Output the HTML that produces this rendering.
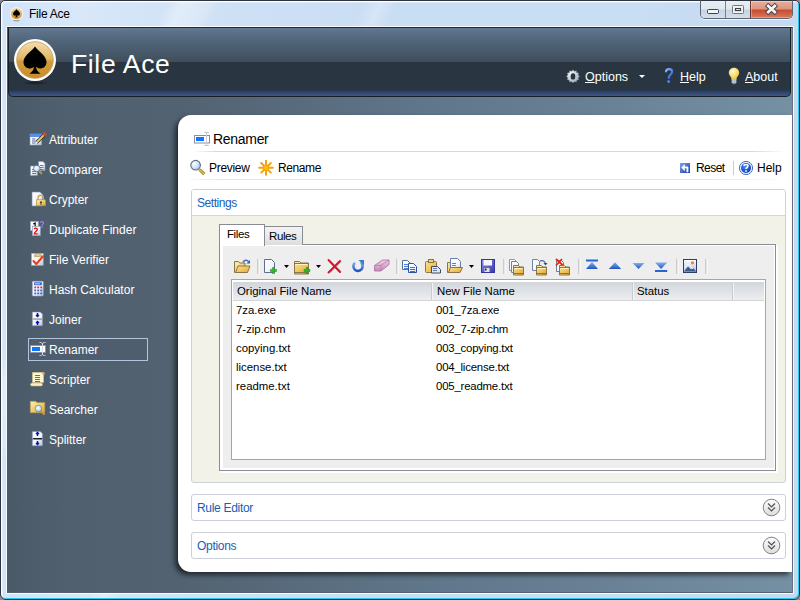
<!DOCTYPE html>
<html><head><meta charset="utf-8">
<style>
*{margin:0;padding:0;box-sizing:border-box}
html,body{width:800px;height:600px;overflow:hidden;background:#8a8c90}
body{font-family:"Liberation Sans",sans-serif;font-size:12px;position:relative}
.a{position:absolute}
#frame{left:0;top:0;width:800px;height:600px;border:1px solid #2c3440;border-radius:5px 5px 6px 6px;
 background:linear-gradient(115deg,rgba(255,255,255,0) 0,rgba(255,255,255,0) 150px,rgba(255,255,255,0.35) 165px,rgba(255,255,255,0.2) 190px,rgba(255,255,255,0) 200px,rgba(255,255,255,0) 330px,rgba(255,255,255,0.25) 345px,rgba(255,255,255,0) 360px),linear-gradient(90deg,#cfe3f9 0,#d8e8f9 80px,#cfe1f5 200px,#c9ddf3 400px,#cadef3 600px,#c4daf1 100%);
 box-shadow:inset 1px 1px 0 #fff,inset -1px -1px 0 #25c6ef,inset 2px 2px 0 rgba(255,255,255,.3)}
#client{left:7px;top:27px;width:786px;height:566px;border:1px solid #1f2a33;border-left-color:#4a5a69;border-right-color:#68727e;border-bottom-color:#56626e;box-shadow:0 0 0 1px rgba(255,255,255,0.85);
 background:linear-gradient(90deg,#4a5a69 0,#50606e 60px,#526271 170px,#60768a 420px,#6b8397 620px,#7590a3 100%)}
.side{left:30px;height:16px;width:140px;color:#fff;font-size:12px}
.side{letter-spacing:0}
.side span{position:absolute;left:19px;top:1px;white-space:nowrap}
.lv{font-size:11.4px;color:#000;white-space:nowrap}
.side svg{position:absolute;left:0;top:0}
</style></head><body>
<div id="frame" class="a"></div>
<!-- title bar -->
<svg class="a" style="left:9px;top:6px" width="15" height="16" viewBox="0 0 15 16">
 <ellipse cx="7.5" cy="14.6" rx="3.5" ry="0.8" fill="#000" opacity="0.3"/>
 <circle cx="7.5" cy="7.6" r="6.6" fill="#fbf3e6"/>
 <circle cx="7.5" cy="7.6" r="5.6" fill="url(#goldS)"/>
 <path d="M7.5 3.2C6.6 4.6 4 5.8 4 7.8c0 1.3 1 2 2 2 .6 0 1-.3 1.2-.5-.1.9-.6 1.5-1.3 2h3.2c-.7-.5-1.2-1.1-1.3-2 .2.2.6.5 1.2.5 1 0 2-.7 2-2 0-2-2.6-3.2-3.5-4.6z" fill="#000"/>
 <defs><linearGradient id="goldS" x1="0" y1="0" x2="0" y2="1"><stop offset="0" stop-color="#f0d6a0"/><stop offset="1" stop-color="#c98f2e"/></linearGradient></defs>
</svg>

<div class="a" style="left:29px;top:7px;font-size:12px;color:#000;letter-spacing:-0.25px">File Ace</div>
<!-- caption buttons -->
<div class="a" style="left:700px;top:0;width:93px;height:19px;border:1px solid #5d6672;border-top-color:#2c3440;border-radius:0 0 5px 5px;overflow:hidden;box-shadow:0 1px 0 rgba(255,255,255,0.7)">
 <div class="a" style="left:0;top:0;width:25px;height:17px;background:linear-gradient(180deg,#f2f6fa 0,#e6edf4 1px,#dfe7f0 8px,#c7d4e2 9px,#d3dfeb 100%);border-right:1px solid #77818e"></div>
 <div class="a" style="left:25px;top:0;width:25px;height:17px;background:linear-gradient(180deg,#f2f6fa 0,#e6edf4 1px,#dfe7f0 8px,#c7d4e2 9px,#d3dfeb 100%);border-right:1px solid #6a3830"></div>
 <div class="a" style="left:50px;top:0;width:42px;height:17px;background:linear-gradient(180deg,#f4c8bc 0,#e8ab9a 1px,#dc9480 8px,#c74c2f 9px,#d4674a 14px,#dc7a5c 100%);box-shadow:inset 0 0 0 1px rgba(255,230,220,0.35)"></div>
</div>
<svg class="a" style="left:700px;top:0" width="93" height="18" viewBox="0 0 93 18">
 <rect x="7.5" y="9.5" width="11" height="4" rx="1" fill="#f4f4f2" stroke="#3c424a" stroke-width="1"/>
 <rect x="32.5" y="5.5" width="11" height="8" rx="1" fill="none" stroke="#3c424a" stroke-width="1"/>
 <rect x="33.5" y="6.5" width="9" height="6" fill="none" stroke="#f4f4f2" stroke-width="1.6"/>
 <rect x="35.5" y="8.5" width="5" height="2" fill="none" stroke="#3c424a" stroke-width="1"/>
 <path d="M68.2 6 L74.8 12 M74.8 6 L68.2 12" stroke="#3c424a" stroke-width="4.6" stroke-linecap="square"/>
 <path d="M68.2 6 L74.8 12 M74.8 6 L68.2 12" stroke="#f6f6f4" stroke-width="2.8" stroke-linecap="square"/>
</svg>
<div id="client" class="a"></div>
<!-- header -->
<div class="a" style="left:8px;top:28px;width:783px;height:69px;border-radius:0 0 5px 5px;overflow:hidden;background:#161e28">
 <div class="a" style="left:1px;top:0;width:781px;height:34px;background:linear-gradient(180deg,#627791 0,#52667a 12px,#3e4e5c 34px)"></div>
 <div class="a" style="left:1px;top:34px;width:781px;height:28px;background:#293540"></div>
 <div class="a" style="left:1px;top:62px;width:781px;height:6px;border-radius:0 0 4px 4px;background:linear-gradient(180deg,#263650 0,#34496e 3px,#3e5684 6px)"></div>
</div>
<svg class="a" style="left:12px;top:37px" width="48" height="50" viewBox="0 0 48 50">
 <defs><linearGradient id="gold" x1="0" y1="0" x2="0" y2="1"><stop offset="0" stop-color="#f2ddb0"/><stop offset="0.45" stop-color="#e2b868"/><stop offset="0.55" stop-color="#d19a3a"/><stop offset="1" stop-color="#c88d2c"/></linearGradient>
 <radialGradient id="shd" cx="0.5" cy="0.5" r="0.5"><stop offset="0" stop-color="#000" stop-opacity="0.5"/><stop offset="1" stop-color="#000" stop-opacity="0"/></radialGradient></defs>
 <ellipse cx="23" cy="46" rx="14" ry="2" fill="url(#shd)"/>
 <circle cx="23" cy="23" r="21" fill="#fff"/>
 <circle cx="23" cy="23" r="18.3" fill="url(#gold)"/>
 <circle cx="23" cy="23" r="18.3" fill="none" stroke="#c79a50" stroke-width="0.8"/>
 <path d="M23 9.5 C20 14 11.5 18.5 11.5 25 C11.5 29.5 15 31.5 18 31.5 C20 31.5 21.5 30.5 22 29.8 C21.8 33 20 35 17.5 36.7 L28.5 36.7 C26 35 24.2 33 24 29.8 C24.5 30.5 26 31.5 28 31.5 C31 31.5 34.5 29.5 34.5 25 C34.5 18.5 26 14 23 9.5 Z" fill="#000"/>
</svg>
<div class="a" style="left:71px;top:49px;font-size:26.5px;color:#fff;letter-spacing:0.65px">File Ace</div>
<!-- menu -->

<div class="a" style="left:585px;top:70px;color:#fff;font-size:12.5px"><u>O</u>ptions</div>
<div class="a" style="left:639px;top:75px;width:0;height:0;border-left:3px solid transparent;border-right:3px solid transparent;border-top:3px solid #fff"></div>

<div class="a" style="left:680px;top:70px;color:#fff;font-size:12.5px"><u>H</u>elp</div>

<div class="a" style="left:745px;top:70px;color:#fff;font-size:12.5px"><u>A</u>bout</div>
<!-- sidebar -->
<div class="a" style="left:28px;top:338px;width:120px;height:23px;border:1px solid #b3c5dc;background:#4e5e6f"></div>
<div class="a side" style="left:49px;top:133px;color:#fff">Attributer</div>
<div class="a side" style="left:49px;top:163px;color:#fff">Comparer</div>
<div class="a side" style="left:49px;top:193px;color:#fff">Crypter</div>
<div class="a side" style="left:49px;top:223px;color:#fff">Duplicate Finder</div>
<div class="a side" style="left:49px;top:253px;color:#fff">File Verifier</div>
<div class="a side" style="left:49px;top:283px;color:#fff">Hash Calculator</div>
<div class="a side" style="left:49px;top:313px;color:#fff">Joiner</div>
<div class="a side" style="left:49px;top:343px;color:#fff">Renamer</div>
<div class="a side" style="left:49px;top:373px;color:#fff">Scripter</div>
<div class="a side" style="left:49px;top:403px;color:#fff">Searcher</div>
<div class="a side" style="left:49px;top:433px;color:#fff">Splitter</div>
<!-- panel -->
<div class="a" style="left:178px;top:115px;width:614px;height:457px;border-radius:13px 0 0 13px;background:#fff;box-shadow:-3px 3px 5px rgba(0,0,0,0.6)"></div>
<!-- panel content -->
<div class="a" style="left:213px;top:131px;font-size:14px;color:#000;letter-spacing:-0.3px">Renamer</div>
<div class="a" style="left:192px;top:151px;width:594px;height:1px;background:linear-gradient(90deg,rgba(210,216,224,0) 0,#d3d9e0 25px,#d3d9e0 560px,rgba(210,216,224,0) 100%)"></div>
<div class="a" style="left:209px;top:161px;color:#000;letter-spacing:-0.3px">Preview</div>
<div class="a" style="left:278px;top:161px;color:#000;letter-spacing:-0.4px">Rename</div>
<div class="a" style="left:696px;top:161px;color:#000;letter-spacing:-0.55px">Reset</div>
<div class="a" style="left:733px;top:161px;width:1px;height:14px;background:#c8ccd2"></div>
<div class="a" style="left:757px;top:161px;color:#000">Help</div>
<div class="a" style="left:190px;top:179px;width:596px;height:1px;background:linear-gradient(90deg,rgba(226,230,235,0.3) 0,#e2e6eb 30px,#e2e6eb 520px,rgba(226,230,235,0) 100%)"></div>
<!-- settings group -->
<div class="a" style="left:191px;top:189px;width:595px;height:294px;border:1px solid #ccd0d8;border-radius:3px;background:#f3f2e8;overflow:hidden">
 <div class="a" style="left:0;top:0;width:593px;height:26px;background:#fff;border-bottom:1px solid #d3d6dc"></div>
</div>
<div class="a" style="left:197px;top:196px;color:#1560b8;letter-spacing:-0.45px">Settings</div>
<!-- tabs -->
<div class="a" style="left:219px;top:244px;width:557px;height:227px;border:1px solid #898c95;background:#fff;box-shadow:1px 1px 0 #fff,2px 2px 0 #fff"></div>
<div class="a" style="left:223px;top:246px;width:551px;height:222px;background:#eeeeee"></div>
<div class="a" style="left:264px;top:226px;width:39px;height:19px;border:1px solid #898c95;border-bottom:none;background:linear-gradient(180deg,#f2f2f2 0,#ebebeb 50%,#dcdcdc 100%)"></div>
<div class="a" style="left:219px;top:224px;width:46px;height:22px;border:1px solid #898c95;border-bottom:none;background:#fff"></div>
<div class="a" style="left:227px;top:228px;color:#000;font-size:11.5px;letter-spacing:-0.4px">Files</div>
<div class="a" style="left:269px;top:230px;color:#000;font-size:11.5px;letter-spacing:-0.4px">Rules</div>
<!-- listview -->
<div class="a" style="left:231px;top:279px;width:535px;height:181px;border:1px solid #a3a7ad;background:#fff"></div>
<div class="a" style="left:233px;top:282px;width:531px;height:19px;background:linear-gradient(180deg,#d2d6db 0,#dfe2e6 50%,#eceef0 100%);border-bottom:1px solid #d5d5d5"></div>
<div class="a" style="left:432px;top:283px;width:1px;height:17px;background:#f4f5f6;box-shadow:-1px 0 0 #c8ccd0"></div>
<div class="a" style="left:633px;top:283px;width:1px;height:17px;background:#f4f5f6;box-shadow:-1px 0 0 #c8ccd0"></div>
<div class="a" style="left:733px;top:283px;width:1px;height:17px;background:#f4f5f6;box-shadow:-1px 0 0 #c8ccd0"></div>
<div class="a lv" style="left:237px;top:285px">Original File Name</div>
<div class="a lv" style="left:437px;top:285px">New File Name</div>
<div class="a lv" style="left:637px;top:285px">Status</div>
<div class="a lv" style="left:236px;top:304px">7za.exe</div>
<div class="a lv" style="left:436px;top:304px;letter-spacing:-0.2px">001_7za.exe</div>
<div class="a lv" style="left:236px;top:323px">7-zip.chm</div>
<div class="a lv" style="left:436px;top:323px;letter-spacing:-0.2px">002_7-zip.chm</div>
<div class="a lv" style="left:236px;top:342px">copying.txt</div>
<div class="a lv" style="left:436px;top:342px;letter-spacing:-0.2px">003_copying.txt</div>
<div class="a lv" style="left:236px;top:361px">license.txt</div>
<div class="a lv" style="left:436px;top:361px;letter-spacing:-0.2px">004_license.txt</div>
<div class="a lv" style="left:236px;top:380px">readme.txt</div>
<div class="a lv" style="left:436px;top:380px;letter-spacing:-0.2px">005_readme.txt</div>
<!-- collapsed groups -->
<div class="a" style="left:191px;top:494px;width:595px;height:27px;border:1px solid #ccd0d8;border-radius:3px;background:#fff"></div>
<div class="a" style="left:197px;top:501px;color:#1560b8;letter-spacing:-0.3px">Rule Editor</div>
<div class="a" style="left:191px;top:532px;width:595px;height:27px;border:1px solid #ccd0d8;border-radius:3px;background:#fff"></div>
<div class="a" style="left:197px;top:539px;color:#1560b8;letter-spacing:-0.3px">Options</div>
<svg class="a" style="left:762px;top:498px" width="19" height="19" viewBox="0 0 19 19"><defs><linearGradient id="cg507" x1="0" y1="0" x2="0" y2="1"><stop offset="0" stop-color="#fdfdfd"/><stop offset="1" stop-color="#dcdcdc"/></linearGradient></defs><circle cx="9.5" cy="9.5" r="8.3" fill="url(#cg507)" stroke="#7f7f7f" stroke-width="1"/><path d="M6 5.5l3.5 3.5 3.5-3.5M6 9.5l3.5 3.5 3.5-3.5" fill="none" stroke="#505050" stroke-width="1.15"/></svg>
<svg class="a" style="left:762px;top:536px" width="19" height="19" viewBox="0 0 19 19"><defs><linearGradient id="cg545" x1="0" y1="0" x2="0" y2="1"><stop offset="0" stop-color="#fdfdfd"/><stop offset="1" stop-color="#dcdcdc"/></linearGradient></defs><circle cx="9.5" cy="9.5" r="8.3" fill="url(#cg545)" stroke="#7f7f7f" stroke-width="1"/><path d="M6 5.5l3.5 3.5 3.5-3.5M6 9.5l3.5 3.5 3.5-3.5" fill="none" stroke="#505050" stroke-width="1.15"/></svg>
<!--TB--><svg class="a" style="left:0;top:0" width="800" height="600" viewBox="0 0 800 600"><defs>
<linearGradient id="fold" x1="0" y1="0" x2="1" y2="1"><stop offset="0" stop-color="#fdf0b8"/><stop offset="0.6" stop-color="#f3d070"/><stop offset="1" stop-color="#dca42c"/></linearGradient>
<linearGradient id="foldF" x1="0" y1="0" x2="1" y2="1"><stop offset="0" stop-color="#fbe49a"/><stop offset="1" stop-color="#e6a92a"/></linearGradient>
<linearGradient id="page" x1="0" y1="0" x2="1" y2="1"><stop offset="0" stop-color="#ffffff"/><stop offset="0.6" stop-color="#f2f5fa"/><stop offset="1" stop-color="#c9d3e6"/></linearGradient>
<linearGradient id="blueA" x1="0" y1="0" x2="0" y2="1"><stop offset="0" stop-color="#7fb0f0"/><stop offset="1" stop-color="#1f55c0"/></linearGradient>
<linearGradient id="flop" x1="0" y1="0" x2="1" y2="1"><stop offset="0" stop-color="#8b8fe8"/><stop offset="1" stop-color="#3a3aa8"/></linearGradient>
<linearGradient id="eras" x1="0" y1="0" x2="0" y2="1"><stop offset="0" stop-color="#f2cfe6"/><stop offset="1" stop-color="#c988b8"/></linearGradient>
<linearGradient id="imgbg" x1="0" y1="0" x2="0" y2="1"><stop offset="0" stop-color="#ffffff"/><stop offset="1" stop-color="#aac0e0"/></linearGradient>
</defs><path d="M234.5 261.5h4l1.5 1.5h5v9.5h-10.5z" fill="url(#fold)" stroke="#8a7548"/><path d="M235.5 272.5l2.5-6.5h12l-2.5 6.5z" fill="url(#foldF)" stroke="#8a7548"/><path d="M243 262.5c1-2.5 4-3 5.5-1" fill="none" stroke="#3f6fb8" stroke-width="1.4"/><path d="M250 260v3.5h-3.5z" fill="#2e5da8"/><rect x="257.5" y="259" width="1" height="15" fill="#a9a9a9"/><rect x="258.5" y="259" width="1" height="15" fill="#fff"/><path d="M264.5 259.5h7l3 3v10h-10z" fill="url(#page)" stroke="#5d6f90" stroke-width="1"/><path d="M272.5 267.5h2v2h2v2h-2v2h-2v-2h-2v-2h2z" fill="#30b82c" stroke="#1a8a1a" stroke-width="0.5"/><path d="M284 265h5l-2.5 3z" fill="#000"/><path d="M294.5 261.5h5l1.5 1.5h7.5v11h-14z" fill="url(#fold)" stroke="#8a7548" stroke-width="1"/><rect x="294.5" y="263.5" width="14" height="9" fill="url(#foldF)" stroke="#8a7548" stroke-width="1"/><path d="M295.5 264.5h12" stroke="#fff6c8" stroke-width="1"/><path d="M306 267.5h2v2h2v2h-2v2h-2v-2h-2v-2h2z" fill="#30b82c" stroke="#1a8a1a" stroke-width="0.5"/><path d="M316 265h5l-2.5 3z" fill="#000"/><path d="M329 260.5l11 11M340 260.5l-11 11" stroke="#555" stroke-width="2" opacity="0.35" transform="translate(0.8 0.8)"/><path d="M328.5 260l11.5 12M340 261l-11.5 11.5" stroke="#e0102a" stroke-width="1.9" stroke-linecap="round"/><path d="M355 262.8a4.6 4.6 0 1 0 5.6 -0.3" fill="none" stroke="url(#blueA)" stroke-width="2.6"/><path d="M358.5 260h5.5v5.5z" fill="#3c78d8"/><path d="M374.5 265.5l8-5.5h6.5v4.5l-8 6.5h-6.5z" fill="url(#eras)" stroke="#a0709a" stroke-width="0.8"/><path d="M374.5 265.5h6.5l8-5.5M381 265.5v5.5" fill="none" stroke="#b47ea8" stroke-width="0.8"/><rect x="396.5" y="259" width="1" height="15" fill="#a9a9a9"/><rect x="397.5" y="259" width="1" height="15" fill="#fff"/><path d="M402.5 260.5h5l3 3v6h-8z" fill="url(#page)" stroke="#5d6f90" stroke-width="1"/><rect x="404" y="264" width="5" height="1" fill="#4f7fcf"/><rect x="404" y="266" width="5" height="1" fill="#4f7fcf"/><rect x="404" y="268" width="5" height="1" fill="#4f7fcf"/><path d="M408.5 263.5h5l3 3v6h-8z" fill="url(#page)" stroke="#2c52a8" stroke-width="1"/><rect x="410" y="267" width="5" height="1" fill="#3f6fcf"/><rect x="410" y="269" width="5" height="1" fill="#3f6fcf"/><rect x="410" y="271" width="5" height="1" fill="#3f6fcf"/><rect x="425.5" y="261.5" width="11" height="11" rx="1" fill="url(#foldF)" stroke="#8a7548"/><rect x="428.5" y="259.5" width="5" height="3" fill="#f2d479" stroke="#8a7548"/><path d="M431.5 266.5h6l3 3v3.5h-9z" fill="#dfe6f2" stroke="#3b4a68"/><rect x="433" y="268" width="4" height="1" fill="#6a7fa8"/><rect x="433" y="270" width="4" height="1" fill="#6a7fa8"/><path d="M447.5 262.5h3v10h-3z" fill="url(#fold)" stroke="#8a7548"/><path d="M450.5 258.5h7l3 3v8h-10z" fill="url(#page)" stroke="#6a7fa8"/><rect x="452" y="263" width="4" height="1" fill="#6a7fa8"/><rect x="452" y="265" width="4" height="1" fill="#6a7fa8"/><path d="M448.5 272.5l2-5h12l-2.5 5z" fill="url(#foldF)" stroke="#8a7548"/><path d="M469 265h5l-2.5 3z" fill="#000"/><rect x="481.5" y="259.5" width="13" height="13" fill="url(#flop)" stroke="#3434a0"/><rect x="483.5" y="260" width="8.5" height="5.5" fill="#f4f6fa"/><rect x="484.5" y="268" width="5" height="4" fill="#dfe3ea"/><rect x="485" y="268.5" width="1.5" height="2" fill="#222"/><rect x="503.5" y="259" width="1" height="15" fill="#a9a9a9"/><rect x="504.5" y="259" width="1" height="15" fill="#fff"/><path d="M509.5 259.5h5l2 2v9h-7z" fill="url(#page)" stroke="#8898b8"/><path d="M511.5 261.5h5l2 2v9h-7z" fill="url(#page)" stroke="#7080a8"/><path d="M513.5 265.5h5l1.5 1.5h3.5v8h-10z" fill="url(#fold)" stroke="#8a7548" stroke-width="1"/><rect x="513.5" y="267.5" width="10" height="6" fill="url(#foldF)" stroke="#8a7548" stroke-width="1"/><path d="M514.5 268.5h8" stroke="#fff6c8" stroke-width="1"/><path d="M532.5 259.5h5l2 2v9h-7z" fill="url(#page)" stroke="#7080a8"/><path d="M540 261c2.5-1 5 0 5.5 2.5" fill="none" stroke="#3a5a98" stroke-width="1.1"/><path d="M543.5 263h4l-2 2.5z" fill="#2c4c88"/><path d="M536.5 265.5h5l1.5 1.5h3.5v8h-10z" fill="url(#fold)" stroke="#8a7548" stroke-width="1"/><rect x="536.5" y="267.5" width="10" height="6" fill="url(#foldF)" stroke="#8a7548" stroke-width="1"/><path d="M537.5 268.5h8" stroke="#fff6c8" stroke-width="1"/><path d="M556.5 260.5h5l2 2v9h-7z" fill="url(#page)" stroke="#7080a8"/><path d="M556 259l7 6.5M562 259l-6 6.5" stroke="#e02a10" stroke-width="1.8"/><path d="M559.5 265.5h5l1.5 1.5h3.5v8h-10z" fill="url(#fold)" stroke="#8a7548" stroke-width="1"/><rect x="559.5" y="267.5" width="10" height="6" fill="url(#foldF)" stroke="#8a7548" stroke-width="1"/><path d="M560.5 268.5h8" stroke="#fff6c8" stroke-width="1"/><rect x="578.5" y="259" width="1" height="15" fill="#a9a9a9"/><rect x="579.5" y="259" width="1" height="15" fill="#fff"/><rect x="586" y="259.5" width="12" height="2" fill="#2b63d6"/><path d="M592 262l6 7h-12z" fill="url(#blueA)"/><path d="M615 262.3l6.2 6.6h-12.4z" fill="url(#blueA)"/><path d="M632.5 263h12l-6 6z" fill="url(#blueA)"/><path d="M655 262.6h12.2l-6.1 6.5z" fill="url(#blueA)"/><rect x="655" y="270" width="12.2" height="2" fill="#2b63d6"/><rect x="676.5" y="259" width="1" height="15" fill="#a9a9a9"/><rect x="677.5" y="259" width="1" height="15" fill="#fff"/><rect x="683.5" y="259.5" width="13" height="13" fill="url(#imgbg)" stroke="#2b3f6a"/><circle cx="692.5" cy="262.8" r="1.6" fill="#f0803a"/><path d="M684 271.5l4-5 3 3 2-1.5 3.5 3.5z" fill="#3a5a90"/><path d="M684 268l4-4 5 5" fill="none" stroke="#fff" stroke-width="0.8"/><rect x="705.5" y="259" width="1" height="15" fill="#a9a9a9"/><rect x="706.5" y="259" width="1" height="15" fill="#fff"/></svg>
<!--/TB-->
<!--SIDE--><svg class="a" style="left:0;top:0" width="800" height="600" viewBox="0 0 800 600"><defs>
<linearGradient id="spage" x1="0" y1="0" x2="1" y2="1"><stop offset="0" stop-color="#ffffff"/><stop offset="0.55" stop-color="#f0f3f8"/><stop offset="1" stop-color="#b8c4d8"/></linearGradient>
<linearGradient id="sgold" x1="0" y1="0" x2="1" y2="1"><stop offset="0" stop-color="#fff0b0"/><stop offset="1" stop-color="#e0a830"/></linearGradient>
<linearGradient id="sblue" x1="0" y1="0" x2="0" y2="1"><stop offset="0" stop-color="#7aaaf0"/><stop offset="1" stop-color="#3a6ad0"/></linearGradient>
<radialGradient id="lens" cx="0.4" cy="0.4" r="0.6"><stop offset="0" stop-color="#ffffff"/><stop offset="1" stop-color="#a8d0f0"/></radialGradient>
</defs><rect x="30" y="134" width="11.5" height="11" fill="url(#spage)" stroke="#8fa0c0" stroke-width="0.6"/><rect x="30" y="134" width="11.5" height="3" fill="#5c8ee8"/><rect x="32" y="138.5" width="3.5" height="1" fill="#5a70a8"/><rect x="32" y="140.5" width="3.5" height="1" fill="#5a70a8"/><rect x="32" y="142.5" width="3.5" height="1" fill="#5a70a8"/><path d="M36.5 142.5l7.5-7.5" stroke="#222" stroke-width="3.2" stroke-linecap="butt"/><path d="M36.8 142.2l7.2-7.2" stroke="#e8c860" stroke-width="2"/><path d="M43 134l1.6-1.6 1.6 1.6-1.6 1.6z" fill="#d85a40" stroke="#c04a30" stroke-width="1.2"/><path d="M35.5 143.5l1-2 1 1z" fill="#fff"/><path d="M38.5 161.5h4.5l2 2v7h-6.5z" fill="url(#spage)" stroke="#8898b8" stroke-width="0.6"/><rect x="40" y="165" width="3.5" height="1" fill="#5a78c8"/><rect x="40" y="167" width="3.5" height="1" fill="#5a78c8"/><rect x="40" y="169" width="3.5" height="1" fill="#5a78c8"/><rect x="30.5" y="166" width="7" height="9.5" fill="url(#spage)" stroke="#8898b8" stroke-width="0.6"/><rect x="32" y="169" width="4" height="1" fill="#5a78c8"/><rect x="32" y="171" width="4" height="1" fill="#5a78c8"/><rect x="32" y="173" width="4" height="1" fill="#5a78c8"/><path d="M39 171l3 3" stroke="#c89020" stroke-width="2"/><circle cx="36.8" cy="168.5" r="3.3" fill="url(#lens)" stroke="#3a5060" stroke-width="0.6"/><path d="M32 192h8l2.5 2.5v11.5h-10.5z" fill="url(#spage)" stroke="#7d8ca8" stroke-width="0.6"/><path d="M38 200v-2a2.7 2.7 0 0 1 5.4 0v2" fill="none" stroke="#c8a860" stroke-width="1.4"/><rect x="36.3" y="199.8" width="9.4" height="6" fill="url(#sgold)" stroke="#b08830" stroke-width="0.6"/><path d="M41 201v4M40 202.5h2" stroke="#3a3a20" stroke-width="0.9"/><rect x="30.3" y="221.3" width="8.2" height="9.4" fill="url(#spage)" stroke="#8898b8" stroke-width="0.6"/><path d="M33.3 224l1.8-1v4.5" fill="none" stroke="#000" stroke-width="1.2"/><rect x="32.3" y="226.3" width="8.2" height="9.4" fill="url(#spage)" stroke="#8898b8" stroke-width="0.6"/><path d="M34.3 229.3c0-1.6 3.2-1.6 3 0.3-.2 1.5-3 2.4-3 4.2h3.4" fill="none" stroke="#e01010" stroke-width="1.3"/><path d="M40.3 222.8c.4-1.6 3.4-1.6 3.2.3-.2 1.2-1.6 1.4-1.6 2.8" fill="none" stroke="#9a80f0" stroke-width="1.2"/><rect x="41.4" y="226.5" width="1.4" height="1.4" fill="#9a80f0"/><rect x="31.3" y="253.3" width="12" height="12.2" fill="url(#spage)" stroke="#8898b8" stroke-width="0.6"/><path d="M34.5 256.5h7v-1.5h-1.5v-1.5h-4v1.5h-1.5z" fill="#e8d078" stroke="#a89050" stroke-width="0.6"/><path d="M33.5 261l2.8 3 6.5-7.5" fill="none" stroke="#e04020" stroke-width="2" stroke-linecap="round" stroke-linejoin="round"/><rect x="32.3" y="281.3" width="11" height="14.8" rx="1" fill="url(#spage)" stroke="#8898b8" stroke-width="0.6"/><rect x="34" y="282.3" width="8" height="3" rx="1" fill="#3a6ad8"/><rect x="35" y="283.3" width="5" height="1" fill="#c0d8ff"/><rect x="34.3" y="286.5" width="1.8" height="1.8" fill="#d03040"/><rect x="37.3" y="286.5" width="1.8" height="1.8" fill="#d03040"/><rect x="40.3" y="286.5" width="1.8" height="1.8" fill="#d03040"/><rect x="34.3" y="289.5" width="1.8" height="1.8" fill="#3a62c8"/><rect x="37.3" y="289.5" width="1.8" height="1.8" fill="#3a62c8"/><rect x="40.3" y="289.5" width="1.8" height="1.8" fill="#3a62c8"/><rect x="34.3" y="292.5" width="1.8" height="1.8" fill="#3a62c8"/><rect x="37.3" y="292.5" width="1.8" height="1.8" fill="#3a62c8"/><rect x="40.3" y="292.5" width="1.8" height="1.8" fill="#3a62c8"/><path d="M32.3 312h8l2.3 2.3v11.5h-10.3z" fill="url(#spage)" stroke="#7d8ca8" stroke-width="0.6"/><path d="M37.5 313v3.5M36 315l1.5 1.5 1.5-1.5M37.5 325v-3.5M36 323l1.5-1.5 1.5 1.5" fill="none" stroke="#0010c0" stroke-width="1.4"/><path d="M33 319.8l1-1.4 1 1.4 1-1.4 1 1.4 1-1.4 1 1.4 1-1.4 1 1.4 1-1.4" fill="none" stroke="#8a8070" stroke-width="0.9"/><rect x="30.5" y="345.5" width="15" height="7" fill="#fff" stroke="#8a8fa0" stroke-width="0.8"/><rect x="32" y="347" width="8" height="4" fill="#0a78ff"/><path d="M42.5 343.5v11M39.5 342.5c1.5 0 3 0 3 1.5 0-1.5 1.5-1.5 3-1.5M39.5 355.5c1.5 0 3 0 3-1.5 0 1.5 1.5 1.5 3 1.5" fill="none" stroke="#d8dce2" stroke-width="1"/><path d="M32.5 372.5h11v10h-11z" fill="#fdf6d0" stroke="#d8c890" stroke-width="0.6"/><circle cx="43.5" cy="373.5" r="1.3" fill="#d4b050"/><rect x="35" y="375" width="5" height="1" fill="#6a6898"/><rect x="35" y="377" width="5" height="1" fill="#6a6898"/><rect x="35" y="379" width="5" height="1" fill="#6a6898"/><rect x="35" y="381" width="5" height="1" fill="#6a6898"/><rect x="30.5" y="383" width="12" height="3" rx="1.5" fill="#fbf0c0" stroke="#c8b070" stroke-width="0.6"/><path d="M30.3 401.3h5.5l1 1.2h8v10.3h-14.5z" fill="url(#sgold)" stroke="#a89050" stroke-width="0.6"/><path d="M40.5 410.5l4 4" stroke="#e09030" stroke-width="2.2"/><circle cx="38.5" cy="408.5" r="3.2" fill="url(#lens)" stroke="#6a6a60" stroke-width="0.6"/><path d="M32.3 431.5h8l2.3 2.3v12h-10.3z" fill="url(#spage)" stroke="#7d8ca8" stroke-width="0.6"/><path d="M37.5 436v-3.5M36 434l1.5-1.5 1.5 1.5M37.5 441v3.5M36 443l1.5 1.5 1.5-1.5" fill="none" stroke="#0010c0" stroke-width="1.4"/><path d="M33 439.5l1-1.5 1 1.5 1-1.5 1 1.5 1-1.5 1 1.5 1-1.5 1 1.5 1-1.5" fill="none" stroke="#000" stroke-width="1"/></svg>
<!--/SIDE-->
<!--ICONS2--><svg class="a" style="left:0;top:0" width="800" height="600" viewBox="0 0 800 600"><defs>
<radialGradient id="lens2" cx="0.35" cy="0.35" r="0.7"><stop offset="0" stop-color="#ffffff"/><stop offset="0.6" stop-color="#cfe4f6"/><stop offset="1" stop-color="#9cc0e0"/></radialGradient>
<radialGradient id="sunc" cx="0.5" cy="0.5" r="0.5"><stop offset="0" stop-color="#ffd000"/><stop offset="1" stop-color="#f5a010"/></radialGradient>
<linearGradient id="rst" x1="0" y1="0" x2="1" y2="1"><stop offset="0" stop-color="#78a8f8"/><stop offset="1" stop-color="#1838a8"/></linearGradient>
<radialGradient id="hlp" cx="0.4" cy="0.35" r="0.7"><stop offset="0" stop-color="#4a88f0"/><stop offset="1" stop-color="#0a38b8"/></radialGradient>
<radialGradient id="gearG" cx="0.35" cy="0.3" r="0.8"><stop offset="0" stop-color="#f4f6f8"/><stop offset="1" stop-color="#9aa8b8"/></radialGradient>
<radialGradient id="bulbG" cx="0.4" cy="0.3" r="0.7"><stop offset="0" stop-color="#fffbe0"/><stop offset="0.4" stop-color="#fce58a"/><stop offset="1" stop-color="#e8c040"/></radialGradient>
<linearGradient id="qG" x1="0" y1="0" x2="1" y2="1"><stop offset="0" stop-color="#8ab8ff"/><stop offset="1" stop-color="#2a5ad0"/></linearGradient>
</defs><rect x="194.5" y="135.5" width="15" height="7.5" fill="#fff" stroke="#8c8ca4" stroke-width="1"/><rect x="196" y="137" width="8" height="4" fill="#0a78ff"/><path d="M206.5 132v14M204 132.5h5M204 145.5h5" stroke="#c8ccd4" stroke-width="1.1"/><path d="M199.5 169.5l4.8 4.6" stroke="#8a6a10" stroke-width="3"/><path d="M199.5 169.5l4.8 4.6" stroke="#f0c040" stroke-width="1.6"/><circle cx="195.6" cy="165.2" r="4.8" fill="url(#lens2)" stroke="#5a7088" stroke-width="1.1"/><g stroke="#f4a010" stroke-width="2" stroke-linecap="round"><path d="M266 160.8v14M259.2 167.8h13.6M261.2 163l9.6 9.6M270.8 163l-9.6 9.6"/></g><circle cx="266" cy="167.8" r="3.3" fill="url(#sunc)"/><rect x="680" y="163" width="10" height="10" fill="url(#rst)"/><path d="M681.2 167.6l3.6-3.6v2.4h2.6a1 1 0 0 1 1 1v4.8h-1.9v-3.9h-1.7v2.9z" fill="#fff"/><circle cx="746" cy="168" r="6.6" fill="#e8f0ff" stroke="#4a70c0" stroke-width="1"/><circle cx="746" cy="168" r="5" fill="url(#hlp)"/><path d="M744 166c0-2 4-2 4 0 0 1.5-2 1.5-2 3" fill="none" stroke="#fff" stroke-width="1.6"/><rect x="745.2" y="170.2" width="1.6" height="1.6" fill="#fff"/><path d="M579.60 76.40 L578.12 77.77 L578.72 79.70 L576.75 80.15 L576.30 82.12 L574.37 81.52 L573.00 83.00 L571.63 81.52 L569.70 82.12 L569.25 80.15 L567.28 79.70 L567.88 77.77 L566.40 76.40 L567.88 75.03 L567.28 73.10 L569.25 72.65 L569.70 70.68 L571.63 71.28 L573.00 69.80 L574.37 71.28 L576.30 70.68 L576.75 72.65 L578.72 73.10 L578.12 75.03Z" fill="url(#gearG)" stroke="#7a8898" stroke-width="0.4"/><ellipse cx="573" cy="76.4" rx="2.3" ry="3.2" fill="#28333d"/><path d="M666 71.5c0-3 6.2-3.2 6.2 0.3 0 2.6-3.4 2.8-3.4 6.2" fill="none" stroke="url(#qG)" stroke-width="2.2" stroke-linecap="round"/><circle cx="668.6" cy="81.5" r="1.5" fill="#4a80e0"/><path d="M734 67.8c-3 0-5.2 2.2-5.2 5 0 2.2 1.6 3.4 2.6 5.2v2h5.2v-2c1-1.8 2.6-3 2.6-5.2 0-2.8-2.2-5-5.2-5z" fill="url(#bulbG)"/><rect x="731.6" y="80" width="4.8" height="3" fill="#b8c0c8"/><rect x="732.4" y="83" width="3.2" height="1.2" fill="#8090a0"/></svg>
<!--/ICONS2-->
</body></html>
